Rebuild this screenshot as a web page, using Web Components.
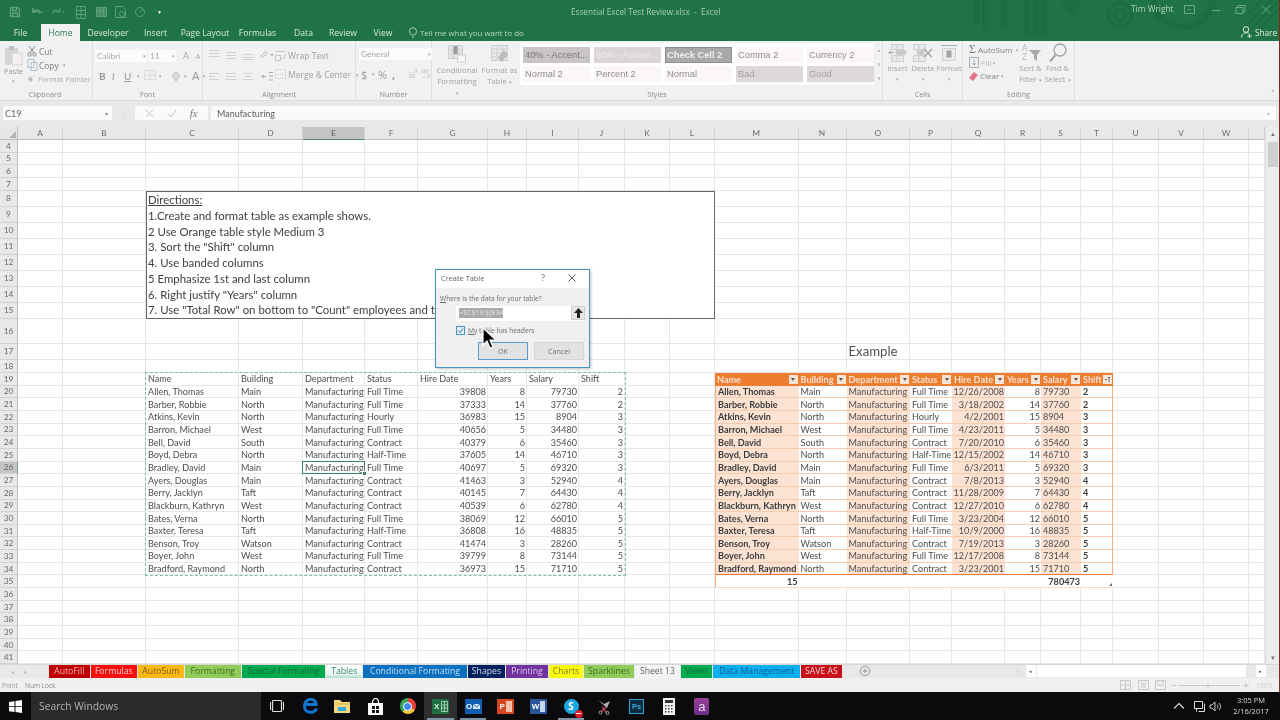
<!DOCTYPE html>
<html>
<head>
<meta charset="utf-8">
<title>Essential Excel Test Review.xlsx - Excel</title>
<style>
html,body{margin:0;padding:0;width:1280px;height:720px;overflow:hidden;background:#fff}
body{position:relative;display:flex;flex-direction:column;font-family:"Open Sans",sans-serif;filter:blur(.35px)}
</style>
</head>
<body>
<xl-titlebar></xl-titlebar>
<xl-ribbon></xl-ribbon>
<xl-formula-bar cell="C19">Manufacturing</xl-formula-bar>
<xl-sheet></xl-sheet>
<xl-sheet-tabs>
  <xl-tab w="41.6" bg="#c00000" fg="#f5b5b5">AutoFill</xl-tab>
  <xl-tab w="47.4" bg="#f50f0f" fg="#ffd0d0">Formulas</xl-tab>
  <xl-tab w="47" bg="#fdb913" fg="#7a5c10">AutoSum</xl-tab>
  <xl-tab w="56.6" bg="#92cc58" fg="#3f6a2c">Formatting</xl-tab>
  <xl-tab w="84.9" bg="#00ab50" fg="#0b6b38">Special Formating</xl-tab>
  <xl-tab w="36.5" bg="#eef6f3" fg="#3f8a78" active>Tables</xl-tab>
  <xl-tab w="105" bg="#0a70bf" fg="#c4def2">Conditional Formating</xl-tab>
  <xl-tab w="38" bg="#03215e" fg="#d5dcec">Shapes</xl-tab>
  <xl-tab w="43" bg="#7133a0" fg="#dcc8ea">Printing</xl-tab>
  <xl-tab w="35" bg="#fbfb10" fg="#7c7c18">Charts</xl-tab>
  <xl-tab w="51" bg="#90cc58" fg="#3f6a2c">Sparklines</xl-tab>
  <xl-tab w="46" bg="#f4f4f4" fg="#666">Sheet 13</xl-tab>
  <xl-tab w="32.5" bg="#00ab50" fg="#0b6b38">Views</xl-tab>
  <xl-tab w="87.5" bg="#0bafee" fg="#0d5f90">Data Management</xl-tab>
  <xl-tab w="42" bg="#c8101a" fg="#f6d4d4">SAVE AS</xl-tab>
</xl-sheet-tabs>
<xl-statusbar></xl-statusbar>
<xl-taskbar></xl-taskbar>
<xl-dialog></xl-dialog>
<xl-cursor></xl-cursor>
<xl-edge></xl-edge>

<script>
const simple = (name, html) => customElements.define(name, class extends HTMLElement {
   constructor(){ super(); this.attachShadow({mode:'open'}).innerHTML = html }
});

/* ---------- title bar + ribbon tabs ---------- */
simple('xl-titlebar', `
<style>
:host{display:block;height:41px;background:#1f7345;color:#cfe3d7;position:relative;flex:none;overflow:hidden;font-family:"Open Sans",sans-serif}
.deco{position:absolute;left:0;top:0}
.top{position:relative;height:24px;display:flex;align-items:center;font-size:8px}
.qat{width:560px;display:flex;align-items:center;gap:0;padding-left:9px;box-sizing:border-box;height:22px}
.qat span{display:flex;width:21px}
.title{width:560px;font-size:8.2px;color:#a9cdb9;padding-left:11px;box-sizing:border-box;margin-top:-2px}
.user{position:absolute;left:1131px;top:3px;font-size:8.4px;color:#b3d2c1}
.win{position:absolute;top:4px;display:flex}
.tabs{position:relative;height:17px;display:flex;font-size:8.6px;color:#d6e8dd}
.tabs div{display:flex;align-items:center;justify-content:center;flex:none}
.tabs .on{background:#f1f1f1;color:#2a7d50}
.tell{color:#b8d6c5;gap:3px;padding-left:2px;font-size:7.9px}
.share{position:absolute;left:1241px;top:2px;display:flex;gap:3px;align-items:center;font-size:8.2px;color:#e3efe8}
</style>
<svg class="deco" width="1280" height="41" fill="none" stroke="#1c6d40">
  <g stroke-width="5"><path d="M977 0v24M985 0v30M1004 0v26"/><path d="M1027 0v34M1036 0v34M1044 0v34"/></g>
  <path d="M1060 0l14 16 8-16" fill="#1c6d40" stroke="none"/>
  <circle cx="1120" cy="15" r="12" stroke-width="3"/><circle cx="1120" cy="15" r="5" stroke-width="3"/>
  <circle cx="1183" cy="-3" r="30" stroke-width="7"/>
  <g stroke-width="2"><path d="M1238 34l40-40M1246 34l34-34M1254 34l26-26M1262 0l-14 14"/></g>
</svg>
<div class="top">
  <div class="qat">
    <span><svg width="12" height="12" fill="none" stroke="#5f9f7d" stroke-width="1.3"><path d="M1.500 1.500h7l2 2v7h-9z"/><path d="M3.500 1.500v3h4v-3M3.500 10v-3h5v3"/></svg></span>
    <span><svg width="14" height="12" fill="none" stroke="#5f9f7d" stroke-width="1.6"><path d="M3 2v4h4M3 6c3-3 7-2 7 2"/><path d="M11 6l2 0"/></svg></span>
    <span><svg width="14" height="12" fill="none" stroke="#4b8f6b" stroke-width="1.6"><path d="M9 2v4H5M9 6C6 3 2 4 2 8"/><path d="M11 6l2 0"/></svg></span>
    <span style="width:20px;margin-left:3px"><svg width="12" height="13" fill="none" stroke="#5f9f7d"><path d="M1.500 .5h9v12h-9zM1.500 4.500h9M1.500 8.500h9M6 .5v12" /></svg></span>
    <span style="width:19px"><svg width="13" height="12" fill="#3f8a62" stroke="#5f9f7d"><path d="M1.500 1.500h10v9h-10zM1.500 5h10M5 1.500v9M8.500 1.500v9"/></svg></span>
    <span style="width:20px"><svg width="13" height="12" fill="none" stroke="#5f9f7d"><path d="M1.500 .5h7l3 3v8h-10z"/><circle cx="8" cy="8" r="2.500"/></svg></span>
    <span style="width:24px"><svg width="13" height="12" fill="none" stroke="#5f9f7d"><circle cx="6" cy="6" r="4.500"/><path d="M6 6l3-3"/></svg></span>
    <span style="width:5px;color:#eaf3ee;font-size:6px">▾</span>
  </div>
  <div class="title">Essential Excel Test Review.xlsx&nbsp; -&nbsp; Excel</div>
  <div class="user">Tim Wright</div>
  <svg class="win" style="left:1183px" width="90" height="12" fill="none" stroke="#6fa88a"><path d="M1.500 1.500h10v8h-10zM5 5.500h3"/><path d="M29 6.500h8"/><path d="M53 3.500h7v6h-7zM55 3.500v-2h7v6h-2"/><path d="M79 1.500l8 8M87 1.500l-8 8"/></svg>
</div>
<div class="tabs">
  <div style="width:41px">File</div>
  <div class="on" style="width:39px">Home</div>
  <div style="width:56px">Developer</div>
  <div style="width:39px">Insert</div>
  <div style="width:60px">Page Layout</div>
  <div style="width:45px">Formulas</div>
  <div style="width:47px">Data</div>
  <div style="width:32px">Review</div>
  <div style="width:48px">View</div>
  <div class="tell"><svg width="8" height="12" fill="none" stroke="#cfe3d7" stroke-width=".8"><path d="M2.500 8C1 6.500.5 5.500.5 4.200a3.500 3.500 0 017 0C7.500 5.500 7 6.500 5.500 8zM3 10h2"/></svg>Tell me what you want to do</div>
  <div class="share"><svg width="11" height="12" fill="none" stroke="#e3efe8"><circle cx="5" cy="3.500" r="2.800"/><path d="M.5 11.500c0-5 6-5.500 7.500-4M8.500 8v4M6.500 10h4"/></svg>Share</div>
</div>`);

/* ---------- ribbon group ---------- */
simple('xl-group', `
<style>
:host{display:flex;flex-direction:column;flex:none;height:59px;box-sizing:border-box;border-right:1px solid #dedede;position:relative}
.body{flex:1;min-height:0;display:flex}
.lab{height:11px;line-height:10px;text-align:center;font-size:7.2px;color:#8c8c8c;margin-bottom:0}
</style>
<div class="body"><slot></slot></div>
<div class="lab"><slot name="label"></slot></div>`);

simple('xl-ribbon', `
<style>
:host{display:flex;height:59px;flex:none;background:#f1f1f1;color:#969696;font-family:"Open Sans",sans-serif;font-size:7.8px;position:relative;box-shadow:0 1px 0 #dcdcdc;z-index:1}
.col{display:flex;flex-direction:column;flex:none}
.row{display:flex;align-items:center;flex:none}
.combo{background:#fbfbfb;height:12px;display:flex;align-items:center;justify-content:space-between;padding:0 1px 0 2px;box-sizing:border-box;font-family:Lato,sans-serif;font-size:8.3px;color:#a8a8a8;flex:none}
.arr{font-size:5px;color:#a8a8a8}
.big{display:flex;flex-direction:column;align-items:center;text-align:center;line-height:11px;flex:none;font-size:7.7px;color:#a4a4a4}
.big svg{flex:none}
.gal{display:grid;grid-template-columns:repeat(5,67px);grid-auto-rows:16px;column-gap:4px;row-gap:3px;background:#fff;width:354px;height:42px;padding:4px 0 0 3px;box-sizing:border-box;margin-top:2px;flex:none;font-family:"Liberation Sans",sans-serif;font-size:9.300px;color:#8d8d8d}
.gal div{display:flex;align-items:center;padding-left:2px;background:#fbf7f8}
.scr{width:11px;flex:none;margin-top:2px;height:42px;display:flex;flex-direction:column;font-size:5px;color:#aaa;align-items:center;justify-content:space-around}
.mono{font-weight:700}
</style>
<xl-group style="width:93px">
  <div class="col" style="width:27px;align-items:center;padding-top:4px;box-sizing:border-box">
    <svg width="19" height="21" fill="none"><rect x="1" y="3" width="13" height="17" rx="1" fill="#d4d4d4"/><rect x="5" y="1" width="5" height="4" fill="#bdbdbd"/><path d="M8 8h10v12H8z" fill="#f4f0f0" stroke="#d2d2d2"/></svg>
    <span style="font-size:7.400px;line-height:11px">Paste</span><span class="arr" style="margin-top:1px">▾</span>
  </div>
  <div class="col" style="padding-top:3px;color:#8a8a8a">
    <div class="row" style="height:14px;gap:2px;color:#7d7d7d;font-size:8.4px"><svg width="10" height="12" fill="none" stroke="#7f7f7f" stroke-width=".9"><path d="M2 1l5 7M8 1L3 8"/><circle cx="2.500" cy="9.500" r="1.700"/><circle cx="7.500" cy="9.500" r="1.700"/></svg>Cut</div>
    <div class="row" style="height:14px;gap:1px;color:#7d7d7d;font-size:8.4px"><svg width="11" height="12" fill="#f6f6f6" stroke="#9cb1bf" stroke-width=".8"><path d="M1 .5h6v8H1zM4 3.500h6v8H4z"/></svg>Copy <span class="arr" style="margin-left:3px">▾</span></div>
    <div class="row" style="height:14px;gap:2px;color:#adadad;font-size:7.6px"><svg width="9" height="10" fill="#b8b8b8"><path d="M8 1L5 4 3 3 1 5l3 3 2-2-1-2 3-2z"/></svg>Format Painter</div>
  </div>
  <span slot="label" style="padding-right:2px">Clipboard</span>
</xl-group>

<xl-group style="width:110px">
  <div class="col" style="padding:8px 0 0 2px;box-sizing:border-box">
    <div class="row" style="gap:1px">
      <div class="combo" style="width:52px">Calibri<span class="arr">▾</span></div>
      <div class="combo" style="width:28px">11<span class="arr">▾</span></div>
      <span style="margin-left:6px;font-size:9px;color:#a8a8a8">A</span><span style="margin-left:6px;font-size:7.500px;color:#a8a8a8">A</span>
    </div>
    <div class="row" style="margin-top:7px;padding-left:4px;font-family:Lato,sans-serif;font-size:10px;color:#9a9a9a">
      <span class="mono" style="width:13px">B</span><span style="width:12px;font-style:italic">I</span><span style="width:13px;text-decoration:underline">U</span>
      <span class="arr" style="width:7px">▾</span>
      <svg width="13" height="11" fill="none" stroke="#c6c6c6" stroke-dasharray="1 1"><path d="M.5 .5h11v9H.5zM6 .5v9M.5 5h11"/></svg>
      <span class="arr" style="width:10px;padding-left:2px">▾</span>
      <svg width="13" height="12" fill="#d9d9d9" stroke="#bdbdbd"><path d="M3 6l4-4 4 4-4 5z"/></svg>
      <span class="arr" style="width:8px;padding-left:2px">▾</span>
      <span style="font-size:11px;width:10px">A</span><span class="arr" style="padding-left:1px">▾</span>
    </div>
  </div>
  <span slot="label">Font</span>
</xl-group>

<xl-group style="width:153px">
  <div class="col" style="width:72px;padding:8px 0 0 5px;box-sizing:border-box">
    <svg width="66" height="11" fill="none" stroke="#d0d0d0"><path d="M1 1.500h10M1 4.500h10M1 7.500h10M18 3.500h10M18 6.500h10M18 9.500h10M35 5.500h10M35 8.500h10M35 10.500h10"/><path d="M52 8l6-6M54 9l6-6" stroke="#b8b8b8"/><path d="M62 5l2 2 2-2" fill="#aaa" stroke="none"/></svg>
    <svg style="margin-top:11px" width="66" height="12" fill="none" stroke="#d0d0d0"><path d="M1 2.500h10M1 5.500h6M1 8.500h10M18 2.500h10M18 5.500h10M18 8.500h10M35 2.500h10M37 5.500h6M35 8.500h10"/><path d="M54 5.500h4M54 5.500l2-2M54 5.500l2 2M61 1.500h4M61 5h4M61 9h4" stroke="#a8a8a8"/></svg>
  </div>
  <div class="col" style="padding-top:8px;color:#a0a0a0;font-size:8.600px">
    <div class="row" style="height:13px;gap:1px"><svg width="12" height="11" fill="none" stroke="#c4c4c4"><path d="M.5 1.500h10M.5 5.500h5v5h-5zM10 4v4H7"/></svg>Wrap Text</div>
    <div class="row" style="height:13px;margin-top:6px;gap:1px"><svg width="12" height="11" fill="none" stroke="#c4c4c4" stroke-dasharray="1 1"><path d="M.5 .5h10v9H.5zM3 5h5"/></svg>Merge &amp; Center <span class="arr" style="margin-left:4px">▾</span></div>
  </div>
  <span slot="label">Alignment</span>
</xl-group>

<xl-group style="width:76px">
  <div class="col" style="padding:7px 0 0 3px;box-sizing:border-box">
    <div class="combo" style="width:73px">General<span class="arr">▾</span></div>
    <div class="row" style="margin-top:7px;padding-left:2px;font-size:11px;color:#9c9c9c;height:14px">
      <span style="width:11px">$</span><span class="arr" style="width:6px">▾</span><span style="width:14px">%</span><span style="width:16px;font-weight:700">,</span>
      <span style="font-size:5px;line-height:5px;width:13px;color:#aaa">←.0<br>.00</span><span style="font-size:5px;line-height:5px;color:#aaa">.00<br>→.0</span>
    </div>
  </div>
  <span slot="label">Number</span>
</xl-group>

<xl-group style="width:451px">
  <div class="big" style="width:44px;padding:4px 0 0 3px">
    <svg width="20" height="18" fill="#e6e6e6" stroke="#cfcfcf"><path d="M1.500 .5h14v13h-14zM1.500 5h14M1.500 9h14M6 .5v13M11 .5v13"/><path d="M6.500 1h4v8h-4z" fill="#9a9a9a" stroke="none"/><path d="M10.500 10h8v7h-8z" fill="#f6f6f6"/></svg>
    <span style="margin-top:2px">Conditional</span><span>Formatting <span class="arr">▾</span></span>
  </div>
  <div class="big" style="width:41px;padding-top:4px">
    <svg width="20" height="18" fill="#e9e9e9" stroke="#d0d0d0"><path d="M1.500 .5h16v15h-16zM1.500 4h16M1.500 8h16M1.500 12h16M7 .5v15M12 .5v15"/><path d="M14 5l4 4-6 8-4-4z" fill="#bcbcbc" stroke="none"/></svg>
    <span style="margin-top:2px">Format as</span><span>Table <span class="arr">▾</span></span>
  </div>
  <div class="gal">
    <div style="background:#c9c5c6;color:#777">40% - Accent...</div>
    <div style="background:#dbd4d8;color:#eee">60% - Accent...</div>
    <div style="background:#a9a9a9;color:#eee;font-weight:700;box-shadow:inset 0 0 0 1px #8e8e8e">Check Cell 2</div>
    <div>Comma 2</div>
    <div>Currency 2</div>
    <div>Normal 2</div>
    <div>Percent 2</div>
    <div>Normal</div>
    <div style="background:#dcd8da;color:#a2a2a2">Bad</div>
    <div style="background:#dcd8da;color:#a2a2a2">Good</div>
  </div>
  <div class="scr"><span>▴</span><span>▾</span><span>▾</span></div>
  <span slot="label" style="padding-left:0">Styles</span>
</xl-group>

<xl-group style="width:80px">
  <div class="row" style="align-items:flex-start;padding:3px 0 0 2px;gap:0;width:100%;box-sizing:border-box">
    <div class="big" style="width:25px;font-size:7.600px"><svg width="20" height="18" fill="#e8e8e8" stroke="#cfcfcf"><path d="M3.500 .5h12v5h-12zM3.500 11.500h12v6h-12zM9 .5v5M9 11.500v6"/><path d="M1 8.500h5M3 6.500l-2 2 2 2" fill="none" stroke="#a0a0a0"/><path d="M8 6.500h10v4H8z" fill="#c8c8c8"/></svg><span style="margin-top:1px">Insert</span><span class="arr" style="line-height:10px">▾</span></div>
    <div class="big" style="width:26px;font-size:7.600px"><svg width="22" height="18" fill="#e8e8e8" stroke="#cfcfcf"><path d="M1.500 .5h12v5h-12zM1.500 11.500h12v6h-12zM7 .5v5M7 11.500v6"/><path d="M5 6.500h7v4H5z" fill="#c8c8c8"/><path d="M12 5l8 8M20 5l-8 8" stroke="#a0a0a0" stroke-width="1.300"/></svg><span style="margin-top:1px">Delete</span><span class="arr" style="line-height:10px">▾</span></div>
    <div class="big" style="width:26px;font-size:7.600px"><svg width="20" height="18" fill="#ececec" stroke="#cfcfcf"><path d="M3.500 4.500h13v12h-13z"/><path d="M7.500 6.500h5v7h-5z" fill="#a2a2a2" stroke="none"/><path d="M2 1.500h16" stroke="#a8a8a8"/></svg><span style="margin-top:1px">Format</span><span class="arr" style="line-height:10px">▾</span></div>
  </div>
  <span slot="label">Cells</span>
</xl-group>

<xl-group style="width:112px">
  <div class="col" style="width:54px;padding:2px 0 0 6px;box-sizing:border-box;font-size:8px">
    <div class="row" style="height:13px;gap:2px;color:#808080"><span style="font-family:'Liberation Serif',serif;font-size:12px;width:9px">Σ</span>AutoSum <span class="arr" style="margin-left:2px">▾</span></div>
    <div class="row" style="height:13px;gap:2px;color:#b4b4b4"><svg width="10" height="11" fill="none" stroke="#a4b0b8"><path d="M.5 .5h9v10h-9zM5 2v6M3 6l2 2 2-2"/></svg>Fill <span class="arr">▾</span></div>
    <div class="row" style="height:13px;gap:2px;color:#808080"><svg width="9" height="10" fill="#e07585"><path d="M5 1l4 3-5 6-4-3z"/></svg>Clear <span class="arr">▾</span></div>
  </div>
  <div class="big" style="width:27px;padding-top:2px"><svg width="24" height="19" fill="#a9a9a9"><text x="3" y="8" font-size="8.500" font-family="Open Sans" fill="#b4b4b4">A</text><text x="3" y="17" font-size="8.500" font-family="Open Sans" fill="#b4b4b4">Z</text><path d="M10 7h12l-4 5v6l-3-2v-4z"/></svg><span style="margin-top:1px">Sort &amp;</span><span>Filter <span class="arr">▾</span></span></div>
  <div class="big" style="width:27px;padding-top:2px"><svg width="20" height="19" fill="none" stroke="#a6a6a6" stroke-width="1.300"><circle cx="12" cy="7" r="6"/><path d="M8 11.500l-6 7" stroke-width="2.200"/></svg><span style="margin-top:1px">Find &amp;</span><span>Select <span class="arr">▾</span></span></div>
  <span slot="label">Editing</span>
</xl-group>
<div style="flex:1;display:flex;justify-content:flex-end;align-items:flex-end;padding:0 4px 3px 0;font-size:7px;color:#888">⌃</div>`);

/* ---------- formula bar ---------- */
customElements.define('xl-formula-bar', class extends HTMLElement {
   constructor(){ super(); this.attachShadow({mode:'open'});
      const cell = this.getAttribute('cell');
      this.shadowRoot.innerHTML = `
<style>
:host{display:flex;flex:none;height:27px;box-sizing:border-box;background:#e8e8e8;padding:6px 4px 7px 3px;font-family:Lato,sans-serif;font-size:9px;color:#666;gap:2px}
div{background:#fafafa;display:flex;align-items:center;box-sizing:border-box}
.name{width:109px;padding:0 4px 0 2px;justify-content:space-between}
.dots{background:none;width:19px;justify-content:center;color:#c6c6c6;font-size:8px}
.btn{width:73px;justify-content:space-around;padding:0 4px}
.in{flex:1;padding:0 6px;justify-content:space-between;color:#5c5c5c;margin-left:1px}
i{font-family:"Liberation Serif",serif;color:#777;font-size:11px}
.arr{font-size:6px;color:#888}
</style>
<div class="name">${cell}<span class="arr">▾</span></div>
<div class="dots">⋮</div>
<div class="btn">
  <svg width="9" height="9" stroke="#c2c2c2" fill="none"><path d="M1 1l7 7M8 1L1 8"/></svg>
  <svg width="10" height="9" stroke="#c2c2c2" fill="none"><path d="M1 5l3 3 5-7"/></svg>
  <i>fx</i>
</div>
<div class="in"><slot></slot><span class="arr" style="color:#bbb">▾</span></div>`;
   }
});

/* ---------- worksheet ---------- */
const COLS = [['A',45],['B',83],['C',93],['D',64],['E',62],['F',53],['G',70],['H',39],['I',52],['J',46],['K',45],['L',45],
   ['M',83.5],['N',48],['O',63.5],['P',42],['Q',53],['R',36],['S',40],['T',32],['U',46],['V',45],['W',45],['X',16]];
const ROWS = [];
for(let r=4;r<=41;r++){
   let h = 12.67;
   if(r>=8 && r<=15) h = 16;
   if(r==16) h = 25.33;
   if(r==17) h = 16;
   if(r==18) h = 13;
   ROWS.push([r,h]);
}
// name, building, status, serial, years, salary, shift, date
const PEOPLE = [
 ['Allen, Thomas','Main','Full Time',39808,8,79730,2,'12/26/2008'],
 ['Barber, Robbie','North','Full Time',37333,14,37760,2,'3/18/2002'],
 ['Atkins, Kevin','North','Hourly',36983,15,8904,3,'4/2/2001'],
 ['Barron, Michael','West','Full Time',40656,5,34480,3,'4/23/2011'],
 ['Bell, David','South','Contract',40379,6,35460,3,'7/20/2010'],
 ['Boyd, Debra','North','Half-Time',37605,14,46710,3,'12/15/2002'],
 ['Bradley, David','Main','Full Time',40697,5,69320,3,'6/3/2011'],
 ['Ayers, Douglas','Main','Contract',41463,3,52940,4,'7/8/2013'],
 ['Berry, Jacklyn','Taft','Contract',40145,7,64430,4,'11/28/2009'],
 ['Blackburn, Kathryn','West','Contract',40539,6,62780,4,'12/27/2010'],
 ['Bates, Verna','North','Full Time',38069,12,66010,5,'3/23/2004'],
 ['Baxter, Teresa','Taft','Half-Time',36808,16,48835,5,'10/9/2000'],
 ['Benson, Troy','Watson','Contract',41474,3,28260,5,'7/19/2013'],
 ['Boyer, John','West','Full Time',39799,8,73144,5,'12/17/2008'],
 ['Bradford, Raymond','North','Contract',36973,15,71710,5,'3/23/2001'],
];
const HEAD = ['Name','Building','Department','Status','Hire Date','Years','Salary','Shift'];
const FILTER = `<b class="fb"></b>`;
const SORTED = `<b class="fb sort"><svg width="7" height="7" fill="none" stroke="#555" stroke-width=".8"><path d="M1 3l1 1 1-1M5 1v5M4 2l1-1 1 1"/></svg></b>`;

function cellFor(col,row){
   const i = row-20;
   const p = PEOPLE[i];
   const left = 'CDEFGHIJ'.indexOf(col);
   if(left>=0){
      if(row==19) return [HEAD[left],''];
      if(p){
         const v = [p[0],p[1],'Manufacturing',p[2],p[3],p[4],p[5],p[6]][left];
         return [v, left>=4 ? 'r' : ''];
      }
   }
   const right = 'MNOPQRST'.indexOf(col);
   if(right>=0){
      const band = right%2==0 ? ' band' : '';
      if(row==19) return [`<span>${HEAD[right]}</span>`+(col=='T'?SORTED:FILTER), 'th'];
      if(p){
         const v = [p[0],p[1],'Manufacturing',p[2],p[7],p[4],p[5],p[6]][right];
         let cls = 'td'+band;
         if(col=='M'||col=='T') cls += ' bold';
         if(col=='Q'||col=='R') cls += ' r';
         if(col=='M') cls += ' first';
         if(col=='T') cls += ' last';
         if(row==34) cls += ' end';
         return [v,cls];
      }
      if(row==35){
         if(col=='M') return ['15','r bold tot first'];
         if(col=='S') return ['780473','r bold tot'];
         if(col=='T') return ['<i class="grip"></i>','tot last'];
         return ['','tot'];
      }
   }
   if(col=='O' && row==17) return ['<span class="ex">Example</span>',''];
   return ['',''];
}

customElements.define('xl-sheet', class extends HTMLElement {
   constructor(){ super(); this.attachShadow({mode:'open'});
      // every cell gets its grid lines: the overlays below would push auto-placed ones away
      let html = `<div class="corner" style="grid-area:1/1"><svg width="9" height="9"><path d="M8 1v7H1z" fill="#b4b4b4"/></svg></div>`;
      COLS.forEach(([c],x) => html += `<div class="ch${c=='E'?' sel':''}" style="grid-area:1/${x+2}">${c=='X'?'':c}</div>`);
      ROWS.forEach(([r],y) => {
         html += `<div class="rh${r==26?' sel':''}" style="grid-area:${y+2}/1">${r}</div>`;
         COLS.forEach(([c],x) => {
            const [t,cls] = cellFor(c,r);
            html += `<div class="c ${cls}" style="grid-area:${y+2}/${x+2}">${t}</div>`;
         });
      });
      const rowTrack = ROWS.map(x=>x[1]+'px').join(' ');
      const colTrack = COLS.map(x=>x[1]+'px').join(' ');
      this.shadowRoot.innerHTML = `
<style>
:host{display:block;flex:none;height:537px;overflow:hidden;background:#fff;position:relative}
.wrap{display:flex;height:100%}
.grid{display:grid;grid-template-columns:18px ${colTrack};grid-template-rows:13px ${rowTrack};width:1265px;flex:none;font-family:Lato,sans-serif;font-size:9.100px;color:#4e4e4e;align-content:start}
.corner{background:#e6e6e6;border-right:1px solid #bdbdbd;border-bottom:1px solid #bdbdbd;display:flex;align-items:flex-end;justify-content:flex-end;box-sizing:border-box}
.ch{background:#e8e8e8;border-right:1px solid #d2d2d2;border-bottom:1px solid #bdbdbd;box-sizing:border-box;text-align:center;color:#6e6e6e;font-size:8.400px;line-height:12px}
.ch.sel{background:#c4c4c4;border-bottom:1px solid #4f9373;color:#5a5a5a}
.rh{background:#e8e8e8;border-right:1px solid #bdbdbd;border-bottom:1px solid #d2d2d2;box-sizing:border-box;text-align:center;color:#6a6a6a;font-size:8.400px;display:flex;align-items:center;justify-content:center}
.rh.sel{background:#c4c4c4;border-right:1.500px solid #6fa78c}
.c{border-right:1px solid #e7e7e7;border-bottom:1px solid #e7e7e7;box-sizing:border-box;padding:0 1px 0 2px;white-space:nowrap;overflow:hidden;display:flex;align-items:center;min-width:0}
.r{justify-content:flex-end}
.th{background:#ed7d31;color:#fbe3d4;font-weight:700;justify-content:space-between;border:0;padding:0 1px 0 2px;gap:1px;border-right:0}
.th span{overflow:hidden}
.fb{display:flex;align-items:center;justify-content:center;width:9px;height:9px;background:#f5e3d6;flex:none;position:relative}
.fb:not(.sort)::after{content:"";border:2px solid transparent;border-top:3px solid #555;margin-top:3px}
.td{background:#fff;border-right:0;border-bottom:1px solid #f8cbad}
.band{background:#fbe2d3}
.bold{font-weight:700;color:#3c3c3c}
.first{border-left:1px solid #f4b183}
.last{border-right:1px solid #f4b183}
.end{border-bottom:1.500px solid #ed7d31}
.tot{border-right:0;border-bottom:1px solid #f4d9c6}
.tot.last{position:relative}
.grip{position:absolute;right:1px;bottom:1px;width:3px;height:3px;background:#666;clip-path:polygon(100% 0,100% 100%,0 100%)}
.ex{font-size:13.200px;color:#505050;overflow:visible}
.c:has(.ex){overflow:visible}
.note{grid-area:6/4/14/14;background:#fff;border:1px solid #666;box-sizing:border-box;display:grid;grid-template-rows:repeat(8,1fr);font-size:11.400px;color:#3e3e3e;padding-left:1px;white-space:nowrap}
.note div{display:flex;align-items:center}
.ants{grid-area:17/4/33/12;outline:1px dashed #7fbfa5;pointer-events:none}
.cur{grid-area:24/6/25/7;border:1.500px solid #3a8560;box-sizing:border-box;margin:-1px 0 0 -1px;position:relative;pointer-events:none}
.cur::after{content:"";position:absolute;right:-3px;bottom:-3px;width:3px;height:3px;background:#3a8560;border:1px solid #fff}
.vs{flex:1;background:#ededed;display:flex;flex-direction:column;align-items:center;box-sizing:border-box;border-left:1px solid #dcdcdc;font-size:6px;color:#777;padding-top:3px}
.thumb{width:10px;height:25px;background:#cfcfcf;margin-top:4px;flex:none}
.vs .sp{flex:1}
</style>
<div class="wrap">
  <div class="grid">
    ${html}
    <div class="note">
      <div><u>Directions:</u></div>
      <div>1.Create and format table as example shows.</div>
      <div>2 Use Orange table style Medium 3</div>
      <div>3. Sort the "Shift" column</div>
      <div>4. Use banded columns</div>
      <div>5 Emphasize 1st and last column</div>
      <div>6. Right justify "Years" column</div>
      <div>7. Use "Total Row" on bottom to "Count" employees and t</div>
    </div>
    <div class="ants"></div>
    <div class="cur"></div>
  </div>
  <div class="vs"><span>▲</span><div class="thumb"></div><div class="sp"></div><span style="padding-bottom:2px">▼</span></div>
</div>`;
   }
});

/* ---------- sheet tabs ---------- */
customElements.define('xl-tab', class extends HTMLElement {
   constructor(){ super(); this.attachShadow({mode:'open'});
      const w = this.getAttribute('w'), bg = this.getAttribute('bg'), fg = this.getAttribute('fg');
      this.shadowRoot.innerHTML = `
<style>
:host{display:flex;align-items:center;justify-content:center;flex:none;box-sizing:border-box;height:13px;width:${w}px;background:${bg};background-clip:padding-box;border-right:1px solid #e8e8e8;color:${fg};font-family:"Open Sans",sans-serif;font-size:8.700px;white-space:nowrap;overflow:hidden}
:host([active]){background:linear-gradient(#fff,#eaf4f2 70%,#a8dcd0);background-clip:padding-box}
</style><slot></slot>`;
   }
});

simple('xl-sheet-tabs', `
<style>
:host{display:flex;flex:none;height:14px;background:#e8e8e8;box-shadow:inset 0 1px 0 #d6d6d6;box-sizing:border-box;align-items:flex-start;font-size:6px;color:#bbb;padding-top:.5px}
.nav{width:49px;flex:none;display:flex;gap:10px;padding:3px 0 0 11px;box-sizing:border-box;flex:none}
.add{width:44px;display:flex;justify-content:center;flex:none}
.dots{width:139px;text-align:right;flex:none;padding:2px 5px 0 0;box-sizing:border-box;font-size:7px}
.arr{width:10px;height:12px;background:#fff;text-align:center;color:#555;line-height:12px;font-size:5px;flex:none}
.track{width:209px;height:12px;background:#fff;margin-left:1px;flex:none}
.gap{width:10px;flex:none}
</style>
<div class="nav"><span>◂</span><span>▸</span></div>
<slot></slot>
<div class="add"><svg width="12" height="12" fill="none" stroke="#9a9a9a"><circle cx="6" cy="6" r="4.800"/><path d="M6 3.500v5M3.500 6h5"/></svg></div>
<div class="dots">⋮</div>
<div class="arr">◂</div><div class="track"></div><div class="gap"></div><div class="arr">▸</div>`);

/* ---------- status bar ---------- */
simple('xl-statusbar', `
<style>
:host{display:flex;flex:none;height:14px;background:#f0f0f0;align-items:center;font-family:"Open Sans",sans-serif;font-size:6.500px;color:#9a9a9a;box-sizing:border-box;padding-left:2px}
.l{width:23px;flex:none}
.m{color:#8a8a8a;width:1095px;flex:none}
svg{flex:none}
</style>
<span class="l">Point</span><span class="m">Num Lock</span>
<svg width="140" height="12" fill="none" stroke="#c8c8c8"><path d="M.5 1.500h10v9H.5zM.5 6h10M5.500 1.500v9M18.500 1.500h10v9h-10zM21 4h5M21 6h5M21 8h5M35.500 1.500h10v9h-10zM38 1.500v5h5v-5"/><path d="M52 6.500h4M58 6.500h62M88 4v5M123 6.500h6M126 3.500v6"/></svg>
<span style="color:#d0d0d0;margin-left:-4px">100%</span>`);

/* ---------- taskbar ---------- */
customElements.define('xl-task', class extends HTMLElement {
   constructor(){ super(); this.attachShadow({mode:'open'}).innerHTML = `
<style>
:host{display:flex;align-items:center;justify-content:center;width:32.700px;height:28px;flex:none;box-sizing:border-box;position:relative}
:host([focus]){background:#2f2f2f}
:host([run])::after{content:"";position:absolute;left:3px;right:3px;bottom:0;height:2px;background:#7f93a6}
</style><slot></slot>`;
   }
});

simple('xl-taskbar', `
<style>
:host{display:flex;flex:none;height:28px;background:#0b0b0d;color:#fff;align-items:center;font-family:"Open Sans",sans-serif;position:relative}
.start{width:31px;flex:none;display:flex;justify-content:center}
.search{width:229.600px;height:28px;background:#2b2b2b;color:#b3b3b3;font-size:10.300px;display:flex;align-items:center;padding-left:8px;box-sizing:border-box;flex:none}
.tile{width:15px;height:15px;display:flex;align-items:center;justify-content:center;font-size:8px;font-weight:700;color:#fff;font-family:"Liberation Sans",sans-serif}
.tray{position:absolute;right:0;top:0;height:28px;display:flex;align-items:center;color:#ddd}
.time{text-align:center;font-size:7.500px;line-height:11px;width:58px}
.gap{width:8px;flex:none}
</style>
<div class="start"><svg width="13" height="13" fill="#fff"><path d="M0 2l5.500-.8v5H0zM6.500 1L13 0v6.200H6.500zM0 6.900h5.500v5L0 11.200zM6.500 6.900H13V13l-6.500-1z"/></svg></div>
<div class="search">Search Windows</div>
<xl-task><svg width="14" height="12" fill="none" stroke="#dcdcdc"><rect x="2.500" y=".5" width="9" height="11" rx="1" stroke-width="1.200"/><path d="M.5 2v8M13.500 2v8"/></svg></xl-task>
<xl-task><svg width="16" height="16" fill="none" stroke="#0f78d4" stroke-width="3"><path d="M14.500 10.500c-1 2.800-3 3.800-6 3.800-3.500 0-6-2.500-6-6s2.500-7 6-7c3 0 5.500 2 5.500 5.200H3"/></svg></xl-task>
<xl-task><svg width="16" height="15"><path d="M0 1h6l2 2h8v11H0z" fill="#f6d67e"/><rect y="4" width="16" height="2" fill="#eac35c"/><rect x="4" y="8" width="8" height="4" fill="#3ba7d6"/></svg></xl-task>
<xl-task><svg width="15" height="17" fill="#fff"><path d="M0 5h15v12H0z"/><path d="M4.500 5c0-6 6-6 6 0" fill="none" stroke="#fff" stroke-width="1.200"/><path d="M4 8h3v3H4zM8 8h3v3H8zM4 12h3v3H4zM8 12h3v3H8z" fill="#111"/></svg></xl-task>
<xl-task><div style="width:16px;height:16px;border-radius:50%;background:conic-gradient(#e8443a 0 120deg,#f7c531 120deg 220deg,#37a853 220deg 360deg);display:flex;align-items:center;justify-content:center"><div style="width:7px;height:7px;border-radius:50%;background:#3f85f3;border:1px solid #fff"></div></div></xl-task>
<xl-task focus run><div class="tile" style="background:#1e6f42;width:17px;justify-content:flex-start;padding-left:2px;box-sizing:border-box;font-size:8px;color:#d5eadf">X<svg width="7" height="11" fill="none" stroke="#bcdcca" stroke-width=".8" style="margin-left:2px"><path d="M.5 .5h6v10h-6zM.5 4h6M.5 7h6M3.500 .5v10"/></svg></div></xl-task>
<xl-task run><div class="tile" style="background:#0e5fb3;width:17px;gap:1px">O<svg width="7" height="7" fill="#d5e6f7"><path d="M0 1h7v5H0z"/><path d="M0 1l3.500 3L7 1" stroke="#0e5fb3" fill="none"/></svg></div></xl-task>
<xl-task><div class="tile" style="background:#d3461f;width:17px;gap:1px">P<svg width="6" height="11" fill="#f3c0ac"><path d="M0 0h6v11H0z"/></svg></div></xl-task>
<xl-task><div class="tile" style="background:#2a5699;width:17px;gap:1px">W<svg width="5" height="11" fill="#c5d5ec"><path d="M0 0h5v11H0z"/></svg></div></xl-task>
<xl-task run><div style="position:relative;width:15px;height:15px;border-radius:50%;background:#1aa7e0;display:flex;align-items:center;justify-content:center;font-size:10px;font-weight:700;color:#fff">S<span style="position:absolute;right:-4px;bottom:-4px;width:8px;height:8px;border-radius:50%;background:#d8202c;display:flex;align-items:center;justify-content:center"><i style="width:5px;height:1.500px;background:#fff"></i></span></div></xl-task>
<xl-task><svg width="16" height="17" fill="none"><path d="M2 2l6 4 6-3-3 7z" fill="#b9b0b0"/><path d="M6 9l5 6M10 9l-5 5" stroke="#c14a55" stroke-width="1.300"/><circle cx="4.500" cy="14.500" r="1.500" stroke="#9a9a9a"/><circle cx="11.500" cy="15" r="1.500" stroke="#9a9a9a"/></svg></xl-task>
<xl-task><div class="tile" style="background:#0c2c3e;border:1px solid #2fa3d8;box-sizing:border-box;color:#39a8de;font-size:7.500px;width:15px">Ps</div></xl-task>
<xl-task><svg width="12" height="17"><rect width="12" height="17" fill="#f2f2f2"/><rect x="2" y="2" width="8" height="3" fill="#333"/><path d="M2 7h1.500v1.500H2zM5 7h1.500v1.500H5zM8 7h1.500v1.500H8zM2 10h1.500v1.500H2zM5 10h1.500v1.500H5zM8 10h1.500v1.500H8zM2 13h1.500v1.500H2zM5 13h1.500v1.500H5zM8 13h1.500v1.500H8z" fill="#444"/></svg></xl-task>
<xl-task><div class="tile" style="background:linear-gradient(#9a3f96,#6b2f8a);width:15px;height:17px;border-radius:2px;font-weight:400;font-size:13px;color:#e8d5ea">a</div></xl-task>
<div class="tray">
  <svg width="12" height="8" fill="none" stroke="#ddd" stroke-width="1.100"><path d="M1 6.500l5-5 5 5"/></svg>
  <div class="gap"></div>
  <svg width="13" height="12" fill="none" stroke="#ddd"><path d="M1.500 1.500h8v7h-8zM11.500 3.500v8h-6M3.500 8.500v3"/></svg>
  <div class="gap" style="width:3px"></div>
  <svg width="13" height="11" fill="none" stroke="#ddd" stroke-width=".9"><path d="M1 4h2l3-3v9L3 7H1zM8 3.500c1 1 1 3 0 4M10 2c2 2 2 5 0 7"/></svg>
  <div class="time">3:05 PM<br>2/16/2017</div>
</div>`);

/* ---------- create table dialog ---------- */
simple('xl-dialog', `
<style>
:host{position:absolute;left:435px;top:268.500px;width:154.500px;height:99px;box-sizing:border-box;background:#f0f0f0;border:1.500px solid #4a94c4;font-family:"Open Sans",sans-serif;font-size:6.700px;color:#6c6c6c;display:flex;flex-direction:column;box-shadow:1px 1px 3px rgba(0,0,0,.25);z-index:5}
.head{height:18px;flex:none;background:#fff;display:flex;align-items:center;padding:0 0 2px 5px;box-sizing:border-box;font-size:7.400px;color:#666}
.head .t{width:100px}
.head .q{width:26px;font-size:9px;color:#666}
.body{flex:1;display:flex;flex-direction:column;padding:5px 3px 0 4px}
.lab{line-height:11px}
.in{margin:2px 0 0 16px;height:15px;background:#fff;display:flex;align-items:center;justify-content:space-between;width:129px;flex:none;padding-left:3px;box-sizing:border-box}
.in span{background:#a9a9a9;color:#e4e4e4;line-height:10px;font-size:7px}
.up{width:14px;height:14px;background:#e6e6e6;border:1px solid #cfcfcf;box-sizing:border-box;display:flex;align-items:center;justify-content:center}
.chk{display:flex;align-items:center;margin:5px 0 0 16px;gap:3px;flex:none}
.box{width:9px;height:9px;background:#e3eff8;border:1px solid #4a94c4;box-sizing:border-box;display:flex}
.btns{display:flex;margin:7px 0 0 38px;gap:6px;flex:none}
.btn{width:50px;height:18px;box-sizing:border-box;display:flex;align-items:center;justify-content:center;background:#e2e2e2;border:1px solid #d5d5d5;color:#707070;font-size:7.200px}
.btn.ok{border:1.500px solid #5a9ccb}
</style>
<div class="head"><span class="t">Create Table</span><span class="q">?</span>
  <svg width="10" height="10" fill="none" stroke="#555"><path d="M1.500 1.500l7 7M8.500 1.500l-7 7"/></svg>
</div>
<div class="body">
  <div class="lab"><u>W</u>here is the data for your table?</div>
  <div class="in"><span>=$C$19:$J$34</span>
    <div class="up"><svg width="9" height="10" fill="#222"><path d="M4.500 0L9 5H6v5H3V5H0z"/></svg></div>
  </div>
  <div class="chk"><div class="box"><svg width="7" height="7" fill="none" stroke="#4a6f8c"><path d="M1 3.500l2 2 3-4"/></svg></div><span><u>M</u>y table has headers</span></div>
  <div class="btns"><div class="btn ok">OK</div><div class="btn">Cancel</div></div>
</div>`);

simple('xl-cursor', `
<style>:host{position:absolute;left:482px;top:327px;z-index:6;display:block;width:16px;height:23px}</style>
<svg width="16" height="23"><path d="M1 1v17l4-4 3 7 3-1-3-7h6z" fill="#000" stroke="#fff" stroke-width="1.200"/></svg>`);

simple('xl-edge', `<style>:host{position:absolute;left:1279px;top:0;width:1px;height:692px;background:#7d2c1f;z-index:7}</style>`);
</script>
</body>
</html>
